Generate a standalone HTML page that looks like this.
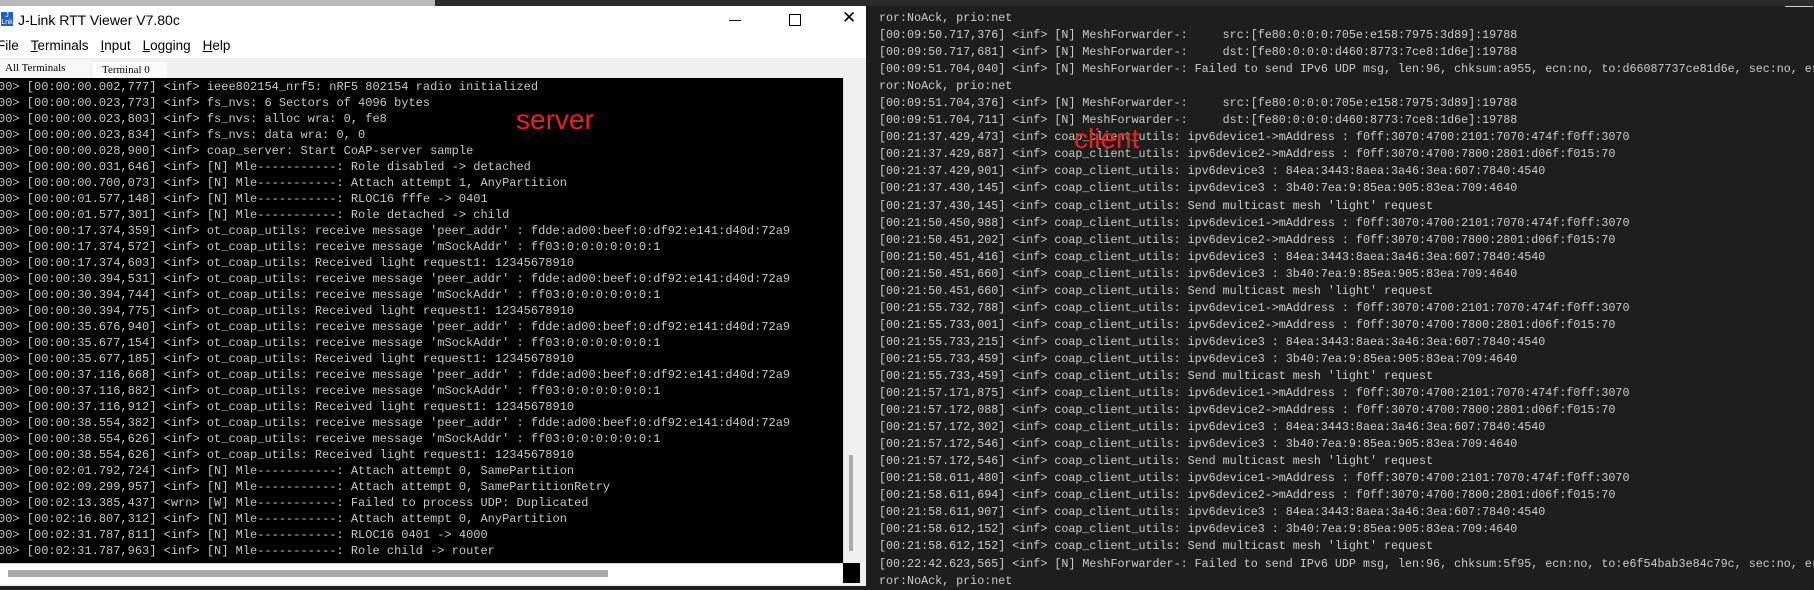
<!DOCTYPE html>
<html><head><meta charset="utf-8"><style>
body{margin:0;width:1814px;height:586px;overflow:hidden;background:#1e1e1e;position:relative;font-family:"Liberation Sans",sans-serif}
.a{position:absolute}
.mono{font-family:"Liberation Mono",monospace;font-size:11.7px;white-space:pre;position:absolute;line-height:16px}
</style></head><body>
<div class="a" style="left:0;top:0;width:866px;height:586px;background:#f0f0f0"></div>
<div class="a" style="left:0;top:0;width:435px;height:6px;background:#b8b8b8"></div>
<div class="a" style="left:435px;top:0;width:431px;height:6px;background:#2b2b2b"></div>
<div class="a" style="left:0;top:6px;width:866px;height:30px;background:#fff"></div>
<div class="a" style="left:1px;top:12px;width:12px;height:14px;background:#1f5fbf;color:#fff;font-size:7px;line-height:7px;text-align:center">J<br>Lnk</div>
<div class="a" style="left:18px;top:12px;font-size:14px;color:#000">J-Link RTT Viewer V7.80c</div>
<div class="a" style="left:729px;top:20px;width:12px;height:1px;background:#000"></div>
<div class="a" style="left:789px;top:14px;width:10px;height:10px;border:1px solid #000"></div>
<div class="a" style="left:842px;top:8px;font-size:17px;color:#000">✕</div>
<div class="a" style="left:0;top:36px;width:866px;height:22px;background:#fff"></div>
<div class="a" style="left:-3px;top:38px;font-size:13.5px;color:#000"><span style="margin-right:12px">File</span><span style="margin-right:12px"><u>T</u>erminals</span><span style="margin-right:12px"><u>I</u>nput</span><span style="margin-right:12px"><u>L</u>ogging</span><span><u>H</u>elp</span></div>
<div class="a" style="left:0;top:60px;width:90px;height:18px;background:#f8f8f8"></div>
<div class="a" style="left:92px;top:62px;width:75px;height:16px;background:#fbfbfb"></div>
<div class="a" style="left:5px;top:62px;font-family:'Liberation Serif',serif;font-size:11px;color:#000">All Terminals</div>
<div class="a" style="left:102px;top:64px;font-family:'Liberation Serif',serif;font-size:11px;color:#000">Terminal 0</div>
<div class="a" style="left:0;top:78px;width:843px;height:485px;background:#000"></div>
<div class="a" style="left:843px;top:78px;width:17px;height:485px;background:#f0f0f0;border-left:1px solid #ddd"></div>
<div class="a" style="left:849px;top:455px;width:4px;height:96px;background:#aaa"></div>
<div class="a" style="left:0;top:563px;width:843px;height:20px;background:#fff;border-top:1px solid #ddd"></div>
<div class="a" style="left:8px;top:570px;width:600px;height:7px;background:#aaa"></div>
<div class="a" style="left:843px;top:563px;width:17px;height:20px;background:#000"></div>
<div class="mono" style="left:-2px;top:79px;font-size:12px;color:#c8c8c8">00> [00:00:00.002,777] &lt;inf&gt; ieee802154_nrf5: nRF5 802154 radio initialized
00> [00:00:00.023,773] &lt;inf&gt; fs_nvs: 6 Sectors of 4096 bytes
00> [00:00:00.023,803] &lt;inf&gt; fs_nvs: alloc wra: 0, fe8
00> [00:00:00.023,834] &lt;inf&gt; fs_nvs: data wra: 0, 0
00> [00:00:00.028,900] &lt;inf&gt; coap_server: Start CoAP-server sample
00> [00:00:00.031,646] &lt;inf&gt; [N] Mle-----------: Role disabled -> detached
00> [00:00:00.700,073] &lt;inf&gt; [N] Mle-----------: Attach attempt 1, AnyPartition
00> [00:00:01.577,148] &lt;inf&gt; [N] Mle-----------: RLOC16 fffe -> 0401
00> [00:00:01.577,301] &lt;inf&gt; [N] Mle-----------: Role detached -> child
00> [00:00:17.374,359] &lt;inf&gt; ot_coap_utils: receive message 'peer_addr' : fdde:ad00:beef:0:df92:e141:d40d:72a9
00> [00:00:17.374,572] &lt;inf&gt; ot_coap_utils: receive message 'mSockAddr' : ff03:0:0:0:0:0:0:1
00> [00:00:17.374,603] &lt;inf&gt; ot_coap_utils: Received light request1: 12345678910
00> [00:00:30.394,531] &lt;inf&gt; ot_coap_utils: receive message 'peer_addr' : fdde:ad00:beef:0:df92:e141:d40d:72a9
00> [00:00:30.394,744] &lt;inf&gt; ot_coap_utils: receive message 'mSockAddr' : ff03:0:0:0:0:0:0:1
00> [00:00:30.394,775] &lt;inf&gt; ot_coap_utils: Received light request1: 12345678910
00> [00:00:35.676,940] &lt;inf&gt; ot_coap_utils: receive message 'peer_addr' : fdde:ad00:beef:0:df92:e141:d40d:72a9
00> [00:00:35.677,154] &lt;inf&gt; ot_coap_utils: receive message 'mSockAddr' : ff03:0:0:0:0:0:0:1
00> [00:00:35.677,185] &lt;inf&gt; ot_coap_utils: Received light request1: 12345678910
00> [00:00:37.116,668] &lt;inf&gt; ot_coap_utils: receive message 'peer_addr' : fdde:ad00:beef:0:df92:e141:d40d:72a9
00> [00:00:37.116,882] &lt;inf&gt; ot_coap_utils: receive message 'mSockAddr' : ff03:0:0:0:0:0:0:1
00> [00:00:37.116,912] &lt;inf&gt; ot_coap_utils: Received light request1: 12345678910
00> [00:00:38.554,382] &lt;inf&gt; ot_coap_utils: receive message 'peer_addr' : fdde:ad00:beef:0:df92:e141:d40d:72a9
00> [00:00:38.554,626] &lt;inf&gt; ot_coap_utils: receive message 'mSockAddr' : ff03:0:0:0:0:0:0:1
00> [00:00:38.554,626] &lt;inf&gt; ot_coap_utils: Received light request1: 12345678910
00> [00:02:01.792,724] &lt;inf&gt; [N] Mle-----------: Attach attempt 0, SamePartition
00> [00:02:09.299,957] &lt;inf&gt; [N] Mle-----------: Attach attempt 0, SamePartitionRetry
00> [00:02:13.385,437] &lt;wrn&gt; [W] Mle-----------: Failed to process UDP: Duplicated
00> [00:02:16.807,312] &lt;inf&gt; [N] Mle-----------: Attach attempt 0, AnyPartition
00> [00:02:31.787,811] &lt;inf&gt; [N] Mle-----------: RLOC16 0401 -> 4000
00> [00:02:31.787,963] &lt;inf&gt; [N] Mle-----------: Role child -> router</div>
<div class="a" style="left:516px;top:104px;font-size:28px;color:#e8231a">server</div>
<div class="a" style="left:866px;top:0;width:948px;height:6px;background:#2b2b2b"></div>
<div class="a" style="left:1785px;top:6px;width:28px;height:1px;background:#ccc"></div>
<div class="mono" style="left:879px;top:10px;line-height:17.05px;color:#cccccc">ror:NoAck, prio:net
[00:09:50.717,376] &lt;inf&gt; [N] MeshForwarder-:     src:[fe80:0:0:0:705e:e158:7975:3d89]:19788
[00:09:50.717,681] &lt;inf&gt; [N] MeshForwarder-:     dst:[fe80:0:0:0:d460:8773:7ce8:1d6e]:19788
[00:09:51.704,040] &lt;inf&gt; [N] MeshForwarder-: Failed to send IPv6 UDP msg, len:96, chksum:a955, ecn:no, to:d66087737ce81d6e, sec:no, er
ror:NoAck, prio:net
[00:09:51.704,376] &lt;inf&gt; [N] MeshForwarder-:     src:[fe80:0:0:0:705e:e158:7975:3d89]:19788
[00:09:51.704,711] &lt;inf&gt; [N] MeshForwarder-:     dst:[fe80:0:0:0:d460:8773:7ce8:1d6e]:19788
[00:21:37.429,473] &lt;inf&gt; coap_client_utils: ipv6device1->mAddress : f0ff:3070:4700:2101:7070:474f:f0ff:3070
[00:21:37.429,687] &lt;inf&gt; coap_client_utils: ipv6device2->mAddress : f0ff:3070:4700:7800:2801:d06f:f015:70
[00:21:37.429,901] &lt;inf&gt; coap_client_utils: ipv6device3 : 84ea:3443:8aea:3a46:3ea:607:7840:4540
[00:21:37.430,145] &lt;inf&gt; coap_client_utils: ipv6device3 : 3b40:7ea:9:85ea:905:83ea:709:4640
[00:21:37.430,145] &lt;inf&gt; coap_client_utils: Send multicast mesh 'light' request
[00:21:50.450,988] &lt;inf&gt; coap_client_utils: ipv6device1->mAddress : f0ff:3070:4700:2101:7070:474f:f0ff:3070
[00:21:50.451,202] &lt;inf&gt; coap_client_utils: ipv6device2->mAddress : f0ff:3070:4700:7800:2801:d06f:f015:70
[00:21:50.451,416] &lt;inf&gt; coap_client_utils: ipv6device3 : 84ea:3443:8aea:3a46:3ea:607:7840:4540
[00:21:50.451,660] &lt;inf&gt; coap_client_utils: ipv6device3 : 3b40:7ea:9:85ea:905:83ea:709:4640
[00:21:50.451,660] &lt;inf&gt; coap_client_utils: Send multicast mesh 'light' request
[00:21:55.732,788] &lt;inf&gt; coap_client_utils: ipv6device1->mAddress : f0ff:3070:4700:2101:7070:474f:f0ff:3070
[00:21:55.733,001] &lt;inf&gt; coap_client_utils: ipv6device2->mAddress : f0ff:3070:4700:7800:2801:d06f:f015:70
[00:21:55.733,215] &lt;inf&gt; coap_client_utils: ipv6device3 : 84ea:3443:8aea:3a46:3ea:607:7840:4540
[00:21:55.733,459] &lt;inf&gt; coap_client_utils: ipv6device3 : 3b40:7ea:9:85ea:905:83ea:709:4640
[00:21:55.733,459] &lt;inf&gt; coap_client_utils: Send multicast mesh 'light' request
[00:21:57.171,875] &lt;inf&gt; coap_client_utils: ipv6device1->mAddress : f0ff:3070:4700:2101:7070:474f:f0ff:3070
[00:21:57.172,088] &lt;inf&gt; coap_client_utils: ipv6device2->mAddress : f0ff:3070:4700:7800:2801:d06f:f015:70
[00:21:57.172,302] &lt;inf&gt; coap_client_utils: ipv6device3 : 84ea:3443:8aea:3a46:3ea:607:7840:4540
[00:21:57.172,546] &lt;inf&gt; coap_client_utils: ipv6device3 : 3b40:7ea:9:85ea:905:83ea:709:4640
[00:21:57.172,546] &lt;inf&gt; coap_client_utils: Send multicast mesh 'light' request
[00:21:58.611,480] &lt;inf&gt; coap_client_utils: ipv6device1->mAddress : f0ff:3070:4700:2101:7070:474f:f0ff:3070
[00:21:58.611,694] &lt;inf&gt; coap_client_utils: ipv6device2->mAddress : f0ff:3070:4700:7800:2801:d06f:f015:70
[00:21:58.611,907] &lt;inf&gt; coap_client_utils: ipv6device3 : 84ea:3443:8aea:3a46:3ea:607:7840:4540
[00:21:58.612,152] &lt;inf&gt; coap_client_utils: ipv6device3 : 3b40:7ea:9:85ea:905:83ea:709:4640
[00:21:58.612,152] &lt;inf&gt; coap_client_utils: Send multicast mesh 'light' request
[00:22:42.623,565] &lt;inf&gt; [N] MeshForwarder-: Failed to send IPv6 UDP msg, len:96, chksum:5f95, ecn:no, to:e6f54bab3e84c79c, sec:no, er
ror:NoAck, prio:net</div>
<div class="a" style="left:1074px;top:123px;font-size:28px;color:#e8231a">client</div>
</body></html>
